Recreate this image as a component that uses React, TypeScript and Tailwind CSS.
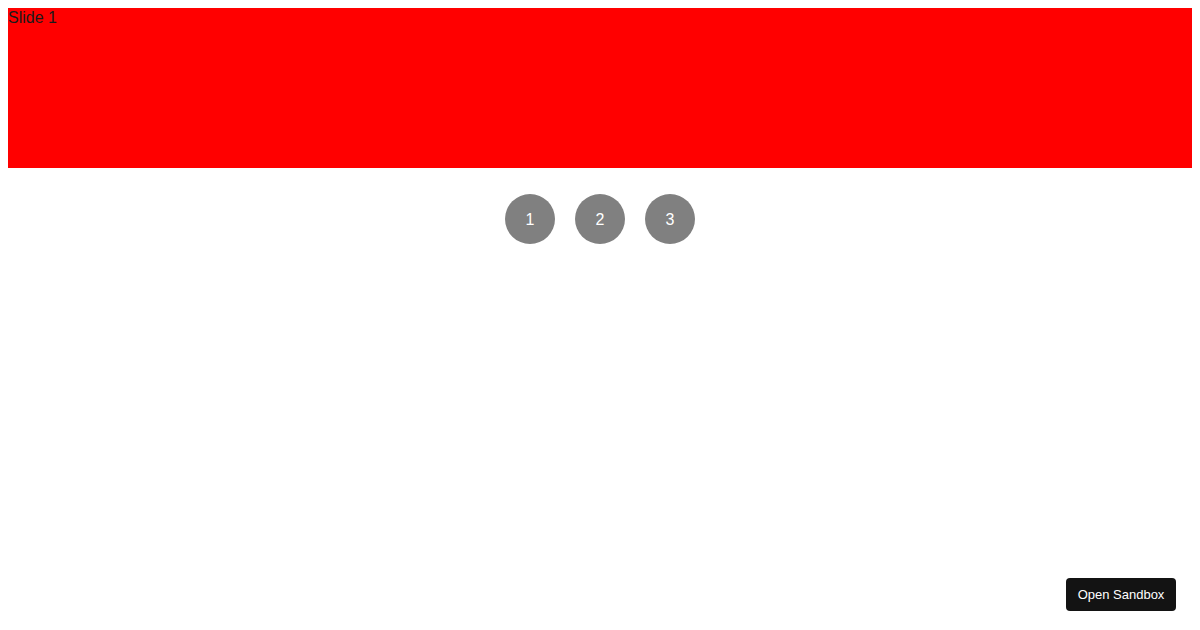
export default function App() {
  return (
    <div className="min-h-[630px] p-2 font-['Liberation_Sans',Arial,sans-serif] text-base text-black">
      <div className="h-[160px] bg-[#ff0000] leading-[20px] text-[#1a1a1a]">Slide 1</div>
      <div className="mt-[26px] flex justify-center gap-5">
        {["1", "2", "3"].map((n) => (
          <button
            key={n}
            className="flex h-[50px] w-[50px] items-center justify-center rounded-full bg-[#808080] pt-[2px] text-base text-white"
          >
            {n}
          </button>
        ))}
      </div>
      <a className="fixed bottom-[19px] right-6 flex h-[33px] w-[110px] items-center justify-center rounded bg-[#131313] text-[13px] text-white">
        Open Sandbox
      </a>
    </div>
  );
}
